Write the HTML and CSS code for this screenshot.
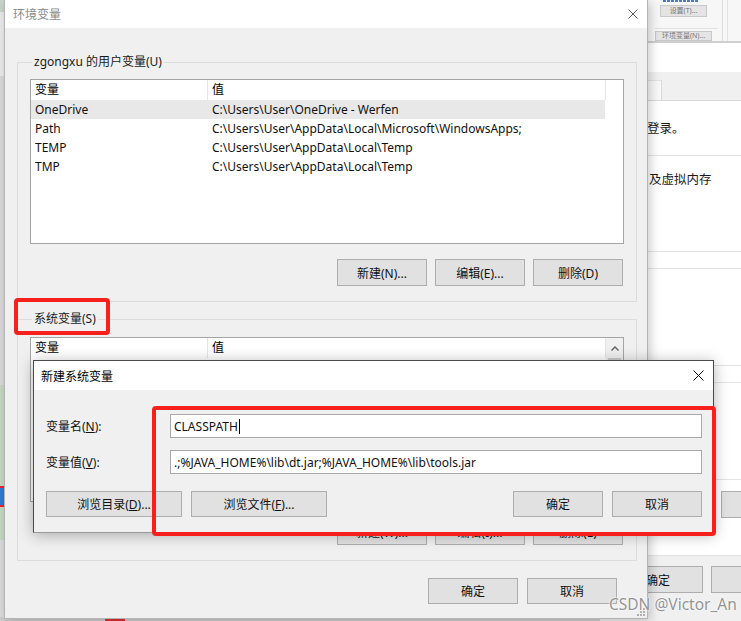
FILE: index.html
```html
<!DOCTYPE html>
<html lang="zh-CN">
<head>
<meta charset="utf-8">
<title>环境变量</title>
<link rel="stylesheet" href="styles.css">
</head>
<body>
<div class="desktop">
  <div class="edge-strip"></div>
  <div class="bottom-strip"></div>

  <div class="bg-window">
    <div class="bg-shot">
      <div class="shot-col">
        <div class="shot-link"></div>
        <div class="shot-btn b1">设置(T)...</div>
        <div class="shot-rule"></div>
        <div class="shot-btn b2">环境变量(N)...</div>
      </div>
      <div class="shot-vline"></div>
    </div>
    <div class="bg-gap"></div>
    <div class="bg-tabs"><span class="bg-tab"></span></div>
    <div class="bg-row r1">登录。</div>
    <div class="bg-row r2">及虚拟内存</div>
    <div class="bg-sp h49"></div>
    <div class="bg-rule"></div>
    <div class="bg-sp h16"></div>
    <div class="bg-rule"></div>
    <div class="bg-sp h96"></div>
    <div class="bg-rule"></div>
    <div class="bg-sp h16"></div>
    <div class="bg-rule"></div>
    <div class="bg-sp h96"></div>
    <div class="bg-rule"></div>
    <div class="bg-btnrow"><span class="btn bg-btn"></span></div>
    <div class="bg-footer">
      <span class="btn">确定</span>
      <span class="btn"></span>
    </div>
  </div>

  <div class="win main">
    <div class="titlebar">
      <span class="title">环境变量</span>
      <svg class="close" width="10" height="10" viewBox="0 0 10 10"><path d="M0.5 0.5 L9.5 9.5 M9.5 0.5 L0.5 9.5" stroke="#5a5a5a" stroke-width="1" fill="none"/></svg>
    </div>
    <div class="win-body">
      <fieldset class="group">
        <legend>zgongxu 的用户变量(U)</legend>
        <div class="list">
          <div class="list-head">
            <span class="c1">变量</span><span class="c2">值</span><span class="c3"></span>
          </div>
          <div class="row sel"><span class="c1">OneDrive</span><span class="c2">C:\Users\User\OneDrive - Werfen</span></div>
          <div class="row"><span class="c1">Path</span><span class="c2">C:\Users\User\AppData\Local\Microsoft\WindowsApps;</span></div>
          <div class="row"><span class="c1">TEMP</span><span class="c2">C:\Users\User\AppData\Local\Temp</span></div>
          <div class="row"><span class="c1">TMP</span><span class="c2">C:\Users\User\AppData\Local\Temp</span></div>
        </div>
        <div class="btn-row">
          <span class="btn">新建(N)...</span>
          <span class="btn">编辑(E)...</span>
          <span class="btn">删除(D)</span>
        </div>
      </fieldset>

      <fieldset class="group g2">
        <legend>系统变量(S)</legend>
        <div class="list">
          <div class="list-head">
            <span class="c1">变量</span><span class="c2">值</span><span class="c3 short"></span>
            <span class="scroll-up"><svg width="8" height="5" viewBox="0 0 8 5"><path d="M0.5 4.5 L4 1 L7.5 4.5" stroke="#606060" stroke-width="1.4" fill="none"/></svg></span>
          </div>
          <div class="sys-body"><span class="sys-track"><span class="sys-thumb"></span></span></div>
        </div>
        <div class="btn-row">
          <span class="btn">新建(W)...</span>
          <span class="btn">编辑(I)...</span>
          <span class="btn">删除(L)</span>
        </div>
      </fieldset>

      <div class="foot-row">
        <span class="btn">确定</span>
        <span class="btn">取消</span>
      </div>
    </div>
    <svg class="grip" width="8" height="8" viewBox="0 0 8 8"><g fill="#b0b0b0"><rect x="6" y="0" width="2" height="2"/><rect x="3" y="3" width="2" height="2"/><rect x="6" y="3" width="2" height="2"/><rect x="0" y="6" width="2" height="2"/><rect x="3" y="6" width="2" height="2"/><rect x="6" y="6" width="2" height="2"/></g></svg>
  </div>

  <div class="win dialog">
    <div class="titlebar dlg-title">
      <span class="title">新建系统变量</span>
      <svg class="close" width="11" height="11" viewBox="0 0 11 11"><path d="M0.5 0.5 L10.5 10.5 M10.5 0.5 L0.5 10.5" stroke="#111" stroke-width="1" fill="none"/></svg>
    </div>
    <div class="dlg-body">
      <div class="field">
        <label class="lbl">变量名(<u>N</u>):</label>
        <div class="input">CLASSPATH<span class="caret"></span></div>
      </div>
      <div class="field">
        <label class="lbl">变量值(<u>V</u>):</label>
        <div class="input">.;%JAVA_HOME%\lib\dt.jar;%JAVA_HOME%\lib\tools.jar</div>
      </div>
      <div class="dlg-btns">
        <span class="btn wide">浏览目录(<u>D</u>)...</span>
        <span class="btn wide">浏览文件(<u>F</u>)...</span>
        <span class="spacer"></span>
        <span class="btn">确定</span>
        <span class="btn">取消</span>
      </div>
    </div>
  </div>

  <div class="mark mark-sys"></div>
  <div class="mark mark-fields"></div>

  <div class="watermark">CSDN @Victor_An</div>
</div>
</body>
</html>
```

FILE: styles.css
```css
* { box-sizing: border-box; }
html, body { margin: 0; padding: 0; }
body {
  width: 741px;
  height: 621px;
  overflow: hidden;
  font-family: "Noto Sans", "Noto Sans CJK SC", sans-serif;
  font-size: 12px;
  color: #000;
}
u { text-decoration: underline; text-underline-offset: 1px; }

.desktop {
  position: relative;
  width: 741px;
  height: 621px;
  background: #d9d9d9;
  overflow: hidden;
}

.edge-strip {
  position: absolute;
  left: 0; top: 0;
  width: 4px; height: 621px;
  background: linear-gradient(to bottom,
    #cbd6cb 0, #cbd6cb 12px, #ececec 12px, #ececec 76px, #dadada 76px, #dadada 385px,
    #c6d9c2 385px, #c6d9c2 486px, #e23 486px, #e23 488px, #2f7bd3 488px, #2f7bd3 505px,
    #e23 505px, #e23 507px, #c6d9c2 507px, #c6d9c2 540px, #dcdcdc 540px);
}
.bottom-strip {
  position: absolute;
  left: 0; bottom: 0;
  width: 741px; height: 4px;
  background: linear-gradient(to right, #cfcfcf 0, #cfcfcf 105px, #e03030 105px, #e03030 125px, #cfcfcf 125px);
}

/* ---------- background window (right) ---------- */
.bg-window {
  position: absolute;
  left: 600px; top: 0;
  width: 141px; height: 621px;
  background: #fff;
  display: flex;
  flex-direction: column;
}
.bg-shot {
  height: 43px;
  flex: none;
  background: #f7f7f7;
  border-bottom: 2px solid #cfcfcf;
  display: flex;
  padding-left: 55px;
  overflow: hidden;
}
.shot-col {
  width: 68px;
  border-right: 1px solid #dedede;
  display: flex;
  flex-direction: column;
}
.shot-link {
  height: 2px;
  width: 36px;
  margin: 0 0 2px 8px;
  background: repeating-linear-gradient(to right, #4a7cc8 0, #4a7cc8 3px, transparent 3px, transparent 4px);
  flex: none;
}
.shot-btn {
  flex: none;
  background: #e4e4e4;
  border: 1px solid #c8c8c8;
  font-size: 7px;
  line-height: 8px;
  color: #777;
  text-align: center;
  overflow: hidden;
}
.shot-btn.b1 { width: 47px; height: 12px; margin: 1px 0 0 5px; line-height: 10px; }
.shot-btn.b2 { width: 57px; height: 10px; margin: 2px 0 0 0; }
.shot-rule { height: 1px; background: #e2e2e2; margin-top: 11px; width: 63px; flex: none; }
.shot-vline { width: 5px; border-right: 1px solid #e2e2e2; }

.bg-gap { height: 29px; flex: none; }
.bg-tabs {
  height: 29px;
  flex: none;
  background: #f0f0f0;
  border-bottom: 1px solid #d9d9d9;
  display: flex;
  align-items: flex-end;
}
.bg-tab {
  margin-left: 48px;
  width: 14px;
  height: 20px;
  background: #f8f8f8;
  border-right: 1px solid #dadada;
  border-top: 1px solid #e2e2e2;
}
.bg-row {
  flex: none;
  padding-left: 47px;
  font-family: "Noto Sans CJK SC", sans-serif;
  font-size: 12.5px;
  color: #1a1a1a;
  white-space: nowrap;
}
.bg-row.r1 { height: 55px; line-height: 54px; border-bottom: 1px solid #e3e3e3; }
.bg-row.r2 { height: 46px; line-height: 46px; padding-left: 49px; }
.bg-sp { flex: none; }
.bg-sp.h49 { height: 49px; }
.bg-sp.h16 { height: 16px; }
.bg-sp.h96 { height: 96px; }
.bg-rule { flex: none; height: 1px; background: #e3e3e3; }
.bg-btnrow { flex: none; height: 75px; padding: 11px 0 0 121px; }
.bg-btn { display: block; }
.bg-footer {
  flex: 1;
  background: #f0f0f0;
  border-top: 1px solid #e0e0e0;
  display: flex;
  gap: 8px;
  padding: 10px 0 0 13px;
  align-items: flex-start;
}
.bg-footer .btn { height: 27px; }

/* ---------- windows ---------- */
.win {
  position: absolute;
  display: flex;
  flex-direction: column;
}
.main {
  left: 4px; top: 0;
  width: 644px; height: 619px;
  background: #f0f0f0;
  border: 1px solid #b4b4b4;
  border-top: none;
  box-shadow: 2px 2px 10px rgba(0,0,0,0.22);
}
.titlebar {
  flex: none;
  height: 28px;
  background: #fff;
  display: flex;
  align-items: center;
  justify-content: space-between;
  padding: 0 9px 0 8px;
}
.main .title {
  font-family: "Noto Sans CJK SC", sans-serif;
  font-size: 12px;
  color: #8a8a8a;
  line-height: 16px;
}
.win-body {
  flex: 1;
  background: #f0f0f0;
  display: flex;
  flex-direction: column;
}

.group {
  margin: 26px 0 0 12px;
  padding: 0 13px 15px 12px;
  width: 620px;
  border: 1px solid #dcdcdc;
  min-width: 0;
}
.group.g2 { margin-top: 9px; }
.group legend {
  margin-left: 2px;
  padding: 0 2px;
  line-height: 16px;
  font-size: 12px;
  color: #1a1a1a;
}
.list {
  margin-top: 9px;
  width: 594px;
  height: 165px;
  background: #fff;
  border: 1px solid #a4a4a4;
  display: flex;
  flex-direction: column;
}
.g2 .list { margin-top: 10px; }
.list-head {
  flex: none;
  height: 20px;
  display: flex;
  line-height: 20px;
  background: #fff;
}
.list-head .c1 { border-right: 1px solid #e5e5e5; }
.list-head .c3 { width: 18px; border-left: 1px solid #e5e5e5; }
.list-head .c3.short { width: 1px; }
.c1 { width: 177px; padding-left: 4px; flex: none; white-space: nowrap; }
.c2 { width: 397px; padding-left: 4px; flex: none; white-space: nowrap; }
.row {
  display: flex;
  width: 574px;
  height: 19px;
  line-height: 19px;
  color: #111;
}
.row.sel { background: #e8e8e8; }
.scroll-up {
  flex: 1;
  background: #f0f0f0;
  display: flex;
  align-items: center;
  justify-content: center;
}
.sys-body { flex: 1; display: flex; justify-content: flex-end; }
.sys-track { width: 17px; background: #f0f0f0; display: flex; justify-content: center; }
.sys-thumb { width: 13px; height: 60px; margin-top: 0; background: #cdcdcd; }

.btn-row {
  display: flex;
  justify-content: flex-end;
  gap: 8px;
  margin-top: 15px;
}
.btn {
  width: 90px;
  height: 27px;
  background: #e1e1e1;
  border: 1px solid #adadad;
  display: flex;
  align-items: center;
  justify-content: center;
  font-size: 12px;
  color: #111;
  white-space: nowrap;
  flex: none;
}
.g2 .btn-row { margin-top: 16px; }

.foot-row {
  display: flex;
  justify-content: flex-end;
  gap: 9px;
  margin-top: 17px;
  padding-right: 30px;
}
.foot-row .btn { height: 26px; }

.grip { position: absolute; right: 2px; bottom: 2px; }

/* ---------- dialog ---------- */
.dialog {
  left: 33px; top: 360px;
  width: 681px; height: 173px;
  background: #f0f0f0;
  border: 1px solid #4a4a4a;
  border-bottom-color: #9a9a9a;
  box-shadow: 0 2px 14px rgba(0,0,0,0.3);
}
.dlg-title { height: 29px; padding: 0 9px 0 7px; }
.dlg-title .title {
  font-family: "Noto Sans CJK SC", sans-serif;
  font-size: 12px;
  color: #000;
  line-height: 16px;
}
.dlg-body {
  flex: 1;
  padding: 24px 11px 0 12px;
  display: flex;
  flex-direction: column;
  gap: 12px;
}
.field { display: flex; align-items: center; height: 24px; }
.lbl { width: 124px; flex: none; color: #111; }
.input {
  width: 532px;
  height: 24px;
  background: #fff;
  border: 1px solid #a8a8a8;
  padding-left: 3px;
  line-height: 21px;
  display: flex;
  align-items: center;
  white-space: nowrap;
  color: #111;
}
.caret { width: 1px; height: 15px; background: #000; margin-left: 1px; }
.dlg-btns { display: flex; gap: 9px; margin-top: 5px; }
.dlg-btns .btn { height: 26px; }
.dlg-btns .btn.wide { width: 136px; }
.spacer { flex: 1; }

/* ---------- annotations ---------- */
.mark {
  position: absolute;
  border: 4px solid #f7201c;
  border-radius: 4px;
}
.mark-sys { left: 14px; top: 298px; width: 96px; height: 37px; }
.mark-fields { left: 152px; top: 406px; width: 564px; height: 130px; }

.watermark {
  position: absolute;
  left: 609px; top: 594px;
  font-family: "Noto Sans", sans-serif;
  font-size: 15.5px;
  line-height: 20px;
  color: #949494;
  text-shadow: 0 0 2px #fff, 0 0 2px #fff;
  white-space: nowrap;
}
```
